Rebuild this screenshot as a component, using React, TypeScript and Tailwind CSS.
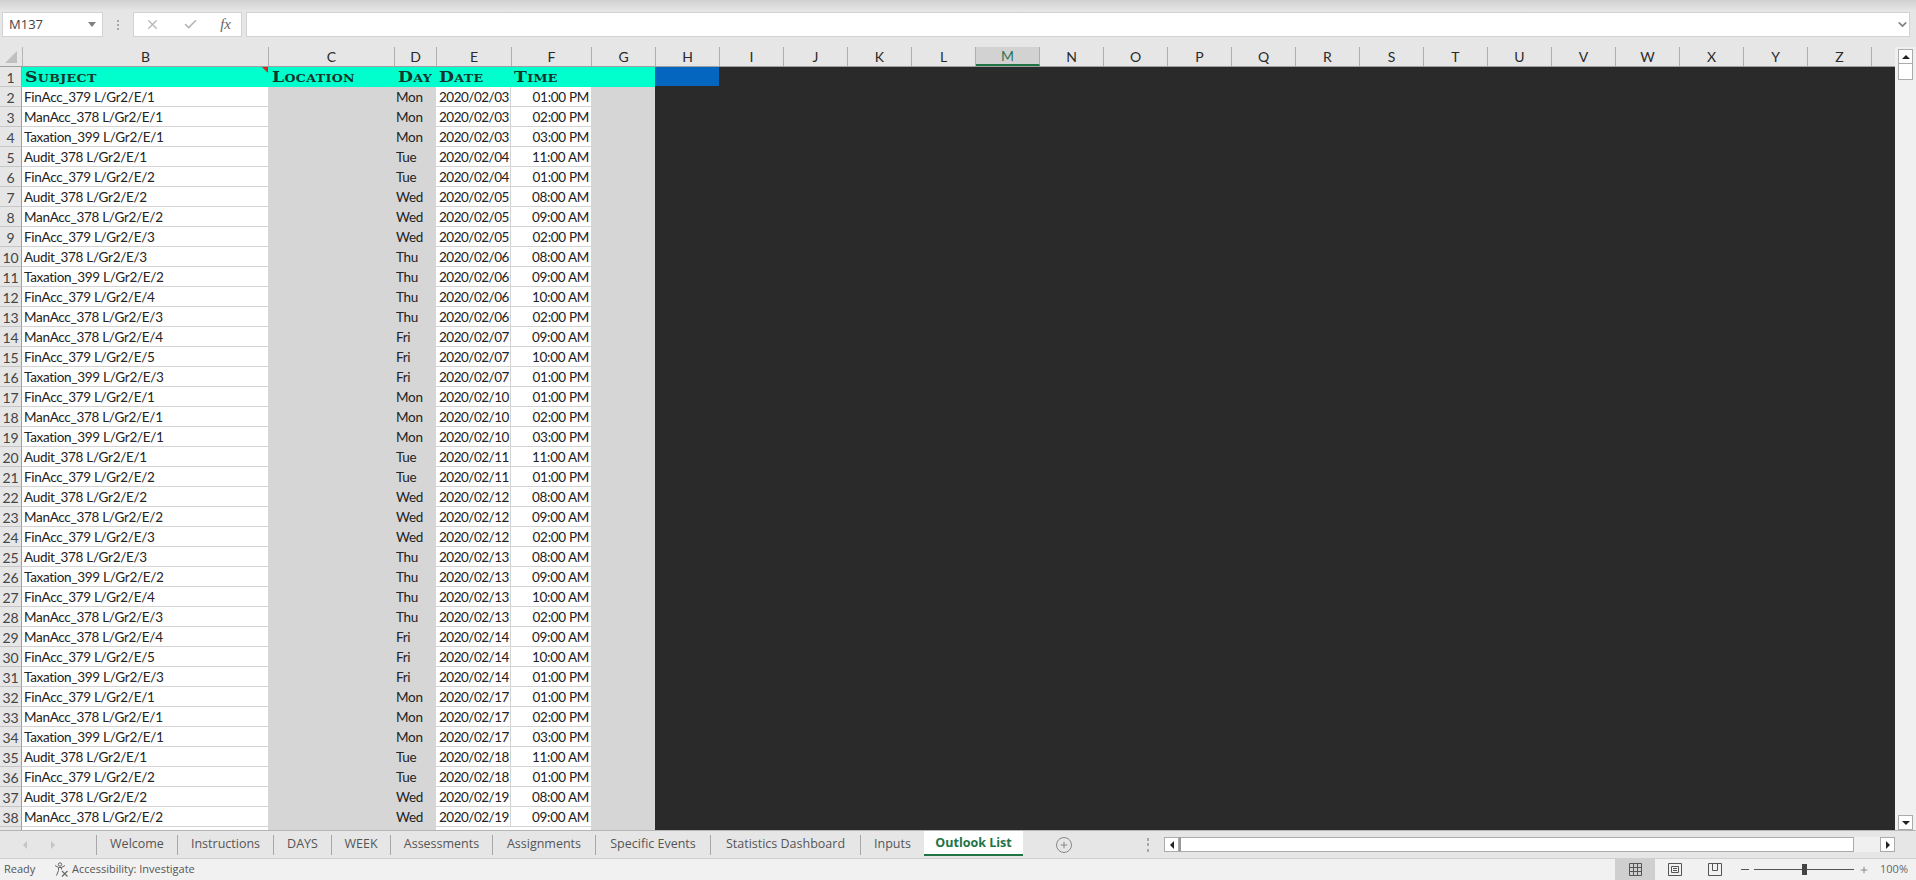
import { ChevronDown, Check, X, Plus } from "lucide-react";

const COLS: [string, number][] = [
  ["B", 246],
  ["C", 126],
  ["D", 42],
  ["E", 75],
  ["F", 80],
  ["G", 64],
  ...("HIJKLMNOPQRSTUVWXYZ".split("").map((c): [string, number] => [c, 64])),
];

const WEEK: [string, string, string, number, string][] = [
  ["FinAcc_379", "1", "Mon", 3, "01:00 PM"],
  ["ManAcc_378", "1", "Mon", 3, "02:00 PM"],
  ["Taxation_399", "1", "Mon", 3, "03:00 PM"],
  ["Audit_378", "1", "Tue", 4, "11:00 AM"],
  ["FinAcc_379", "2", "Tue", 4, "01:00 PM"],
  ["Audit_378", "2", "Wed", 5, "08:00 AM"],
  ["ManAcc_378", "2", "Wed", 5, "09:00 AM"],
  ["FinAcc_379", "3", "Wed", 5, "02:00 PM"],
  ["Audit_378", "3", "Thu", 6, "08:00 AM"],
  ["Taxation_399", "2", "Thu", 6, "09:00 AM"],
  ["FinAcc_379", "4", "Thu", 6, "10:00 AM"],
  ["ManAcc_378", "3", "Thu", 6, "02:00 PM"],
  ["ManAcc_378", "4", "Fri", 7, "09:00 AM"],
  ["FinAcc_379", "5", "Fri", 7, "10:00 AM"],
  ["Taxation_399", "3", "Fri", 7, "01:00 PM"],
];

const rows = Array.from({ length: 37 }, (_, i) => {
  const w = WEEK[i % 15];
  const d = w[3] + 7 * Math.floor(i / 15);
  return {
    n: i + 2,
    subject: `${w[0]} L/Gr2/E/${w[1]}`,
    day: w[2],
    date: `2020/02/${String(d).padStart(2, "0")}`,
    time: w[4],
  };
});

const TABS: [string, number][] = [
  ["Welcome", 81],
  ["Instructions", 96],
  ["DAYS", 58],
  ["WEEK", 59],
  ["Assessments", 102],
  ["Assignments", 103],
  ["Specific Events", 115],
  ["Statistics Dashboard", 150],
  ["Inputs", 64],
];

function HeaderCell({ children, w, pl }: { children: string; w: string; pl: string }) {
  return (
    <div className={`${w} ${pl} h-full flex items-center shrink-0`}>
      <span className="block origin-left scale-x-[1.15] font-['DejaVu_Serif',serif] font-bold text-[15px] tracking-[0.3px] text-[#12352c] [font-variant:small-caps] leading-none whitespace-nowrap">
        {children}
      </span>
    </div>
  );
}

function ColumnHeaders() {
  return (
    <div className="h-[20px] flex shrink-0 bg-[#e6e6e6] border-b border-[#9f9f9f]">
      <div className="w-[23px] shrink-0 flex items-end justify-end pr-[5px] pb-[3px] border-r border-[#b5b5b5]">
        <div className="w-0 h-0 border-l-[12px] border-l-transparent border-b-[12px] border-b-[#c0c0c0]" />
      </div>
      {COLS.map(([c, w]) => (
        <div
          key={c}
          style={{ width: w }}
          className={`shrink-0 flex items-center justify-center font-['Lato',sans-serif] text-[14px] border-r border-[#aeaeae] ${
            c === "M" ? "bg-[#d2d2d2] border-b-2 border-b-[#217346] text-[#2f7355]" : "text-[#2a2a2a]"
          }`}
        >
          {c}
        </div>
      ))}
    </div>
  );
}

function RowHeader({ n }: { n: number | string }) {
  return (
    <div className="h-[20px] w-[22px] shrink-0 pt-[1px] bg-[#e6e6e6] flex items-center justify-center font-['Lato',sans-serif] text-[14px] tracking-normal text-[#444] border-r border-[#9f9f9f] border-b border-b-[#c6c6c6]">
      {n}
    </div>
  );
}

function Sheet() {
  return (
    <div className="w-[655px] shrink-0 flex flex-col overflow-hidden">
      <div className="h-[20px] flex shrink-0">
        <RowHeader n={1} />
        <div className="w-[633px] flex bg-[#00ffcc] relative">
          <HeaderCell w="w-[246px]" pl="pl-[3px]">Subject</HeaderCell>
          <HeaderCell w="w-[126px]" pl="pl-[4px]">Location</HeaderCell>
          <HeaderCell w="w-[42px]" pl="pl-[4px]">Day</HeaderCell>
          <HeaderCell w="w-[75px]" pl="pl-[3px]">Date</HeaderCell>
          <HeaderCell w="w-[80px]" pl="pl-[3px]">Time</HeaderCell>
          <div className="absolute left-[240px] top-0 w-0 h-0 border-l-[6px] border-l-transparent border-t-[6px] border-t-[#e02020]" />
        </div>
      </div>
      {rows.map((r) => (
        <div
          key={r.n}
          className="h-[20px] flex shrink-0 font-['Lato',sans-serif] text-[13.5px] tracking-[-0.3px] text-[#222] whitespace-nowrap"
        >
          <RowHeader n={r.n} />
          <div className="w-[246px] shrink-0 pt-[1px] bg-white border-b border-[#d4d4d4] pl-[2px] flex items-center">
            {r.subject}
          </div>
          <div className="w-[126px] shrink-0 bg-[#d6d6d6]" />
          <div className="w-[42px] shrink-0 pt-[1px] bg-[#d6d6d6] border-b border-[#d6d6d6] pl-[2px] flex items-center">
            {r.day}
          </div>
          <div className="w-[75px] shrink-0 pt-[1px] bg-white border-b border-r border-[#d4d4d4] pl-[3px] flex items-center tracking-[-0.5px]">
            {r.date}
          </div>
          <div className="w-[80px] shrink-0 pt-[1px] bg-white border-b border-[#d4d4d4] pr-[2px] flex items-center justify-end">
            {r.time}
          </div>
          <div className="w-[64px] shrink-0 bg-[#d6d6d6]" />
        </div>
      ))}
      <div className="h-[20px] flex shrink-0">
        <RowHeader n="" />
        <div className="w-[246px] bg-white" />
        <div className="w-[168px] bg-[#d6d6d6]" />
        <div className="w-[155px] bg-white" />
        <div className="w-[64px] bg-[#d6d6d6]" />
      </div>
    </div>
  );
}

function AccessibilityIcon() {
  return (
    <svg width="15" height="15" viewBox="0 0 15 15" fill="none" stroke="#666" strokeWidth="1">
      <circle cx="6" cy="2.5" r="1.7" />
      <path d="M1 3.5 L4.5 5.5 H7.5 L11 3.5" />
      <path d="M4.5 5.5 V8.5 L2.5 13.5" />
      <path d="M7.5 5.5 V7.5" />
      <path d="M8 9 L13.5 14.5 M13.5 9 L8 14.5" strokeWidth="1.1" />
    </svg>
  );
}

function TabBar() {
  return (
    <div className="h-[29px] shrink-0 flex items-center bg-[#e6e6e6] border-t border-[#b5b5b5] border-b border-b-[#cfcfcf] font-['Open_Sans',sans-serif] text-[12.5px] text-[#555]">
      <div className="w-[96px] shrink-0 flex items-center gap-[24px] pl-[23px]">
        <span className="w-0 h-0 border-y-[4px] border-y-transparent border-r-[4px] border-r-[#c4c4c4]" />
        <span className="w-0 h-0 border-y-[4px] border-y-transparent border-l-[4px] border-l-[#c4c4c4]" />
      </div>
      {TABS.map(([t, w]) => (
        <div
          key={t}
          style={{ width: w }}
          className="h-[20px] shrink-0 flex items-center justify-center border-l border-[#a8a8a8] whitespace-nowrap"
        >
          {t}
        </div>
      ))}
      <div className="w-[99px] h-[25px] -mt-[3px] pt-[2px] shrink-0 flex items-center justify-center bg-white border-b-2 border-[#217346] font-bold text-[#217346] whitespace-nowrap">
        Outlook List
      </div>
      <div className="ml-[33px] w-[16px] h-[16px] shrink-0 rounded-full border border-[#888] flex items-center justify-center">
        <Plus size={10} strokeWidth={2} className="text-[#777]" />
      </div>
      <div className="ml-[75px] w-[2px] h-[14px] shrink-0 flex flex-col justify-between">
        <span className="w-[2px] h-[3px] bg-[#a8a8a8]" />
        <span className="w-[2px] h-[3px] bg-[#a8a8a8]" />
        <span className="w-[2px] h-[3px] bg-[#a8a8a8]" />
      </div>
      <div className="ml-[15px] flex-1 min-w-0 flex items-center h-[15px]">
        <div className="w-[15px] h-[15px] shrink-0 bg-white border border-[#ababab] flex items-center justify-center">
          <span className="w-0 h-0 border-y-[4px] border-y-transparent border-r-[4px] border-r-[#222]" />
        </div>
        <div className="flex-1 h-[15px] bg-white border border-[#ababab] border-l-2 border-l-[#999]" />
        <div className="w-[26px] h-[15px] shrink-0 bg-[#f0f0f0]" />
        <div className="w-[15px] h-[15px] shrink-0 bg-white border border-[#ababab] flex items-center justify-center">
          <span className="w-0 h-0 border-y-[4px] border-y-transparent border-l-[4px] border-l-[#222]" />
        </div>
      </div>
      <div className="w-[21px] shrink-0" />
    </div>
  );
}

function StatusBar() {
  return (
    <div className="h-[21px] shrink-0 bg-[#f1f1f1] font-['Open_Sans',sans-serif] text-[11px] text-[#555] flex items-center pl-[4px]">
      <span className="w-[50px]">Ready</span>
      <AccessibilityIcon />
      <span className="ml-[3px]">Accessibility: Investigate</span>
      <div className="flex-1" />
      <div className="w-[40px] h-full bg-[#cfcfcf] flex items-center justify-center">
        <svg width="13" height="13" viewBox="0 0 13 13" fill="none" stroke="#555">
          <path d="M.5.5h12v12H.5z M.5 4.5h12 M.5 8.5h12 M4.5.5v12 M8.5.5v12" />
        </svg>
      </div>
      <div className="w-[40px] h-full flex items-center justify-center">
        <svg width="14" height="13" viewBox="0 0 14 13" fill="none" stroke="#555">
          <path d="M.5.5h13v12H.5z M3.5 3.5h7v6h-7z M5 5.5h4 M5 7.5h4" />
        </svg>
      </div>
      <div className="w-[40px] h-full flex items-center justify-center">
        <svg width="14" height="13" viewBox="0 0 14 13" fill="none" stroke="#555">
          <path d="M.5.5h13v12H.5z M4.5.5v7h5v-7" />
        </svg>
      </div>
      <div className="w-[8px] h-[1px] ml-[6px] bg-[#555]" />
      <div className="ml-[5px] w-[100px] h-[1px] bg-[#555] relative">
        <div className="absolute left-[48px] -top-[5px] w-[5px] h-[11px] bg-[#444]" />
      </div>
      <Plus size={10} strokeWidth={1.5} className="ml-[5px] text-[#555]" />
      <span className="ml-[11px] mr-[8px] text-[#666]">100%</span>
    </div>
  );
}

export default function App() {
  return (
    <div className="w-[1916px] h-[880px] overflow-hidden flex flex-col bg-[#e6e6e6]">
      <div className="h-[11px] shrink-0 bg-gradient-to-b from-[#d0d0d0] to-[#e6e6e6]" />
      {/* formula bar */}
      <div className="h-[36px] shrink-0 flex items-start gap-[4px] pl-[2px] pr-[6px] pt-[1px]">
        <div className="w-[101px] h-[25px] bg-white border border-[#d2d2d2] flex items-center justify-between pl-[6px] pr-[6px] font-['Open_Sans',sans-serif] text-[13px] text-[#444]">
          M137
          <span className="w-0 h-0 border-x-[4px] border-x-transparent border-t-[5px] border-t-[#808080]" />
        </div>
        <div className="w-[22px] h-[25px] flex flex-col items-center justify-center gap-[2px]">
          <span className="w-[2px] h-[2px] bg-[#a8a8a8]" />
          <span className="w-[2px] h-[2px] bg-[#a8a8a8]" />
          <span className="w-[2px] h-[2px] bg-[#a8a8a8]" />
        </div>
        <div className="w-[109px] h-[25px] bg-white border border-[#d2d2d2] flex items-center justify-between pl-[11px] pr-[10px]">
          <X size={15} strokeWidth={2} className="text-[#b4b4b4]" />
          <Check size={15} strokeWidth={2.5} className="text-[#b4b4b4]" />
          <span className="font-['Liberation_Serif',serif] italic text-[15px] text-[#666] leading-none">fx</span>
        </div>
        <div className="flex-1 h-[25px] bg-white border border-[#d2d2d2] flex items-center justify-end">
          <ChevronDown size={13} strokeWidth={3} className="text-[#808080]" />
        </div>
      </div>

      {/* grid */}
      <div className="flex-1 min-h-0 flex">
        <div className="flex-1 min-w-0 flex flex-col">
          <ColumnHeaders />
          <div className="flex-1 min-h-0 flex">
            <Sheet />
            <div className="flex-1 bg-[#2a2a2a] relative">
              <div className="absolute left-0 top-0 w-[64px] h-[19px] bg-[#0566c0]" />
            </div>
          </div>
        </div>
        <div className="w-[21px] shrink-0 bg-[#f0f0f0] flex flex-col items-center pt-[2px] relative">
          <div className="w-[15px] h-[15px] bg-white border border-[#ababab] flex items-center justify-center">
            <span className="w-0 h-0 border-x-[4px] border-x-transparent border-b-[4px] border-b-[#222]" />
          </div>
          <div className="w-[15px] h-[16px] bg-white border border-[#ababab] border-t-0" />
          <div className="flex-1" />
          <div className="w-[15px] h-[15px] bg-white border border-[#ababab] flex items-center justify-center">
            <span className="w-0 h-0 border-x-[4px] border-x-transparent border-t-[4px] border-t-[#222]" />
          </div>
        </div>
      </div>

      <TabBar />
      <StatusBar />
    </div>
  );
}
